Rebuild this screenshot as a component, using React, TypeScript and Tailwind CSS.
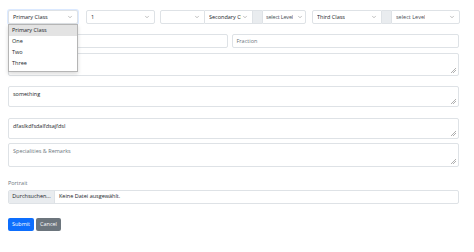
import { ChevronDown } from 'lucide-react';

const field = 'h-[14px] border border-[#dee2e6] bg-white rounded-[2px]';

function Select({ label, className = '', muted = false }: { label: string; className?: string; muted?: boolean }) {
  return (
    <div className={`${field} flex items-center justify-between overflow-hidden pl-[4px] pr-[4px] ${className}`}>
      <span className={`overflow-hidden whitespace-nowrap ${muted ? 'text-[#495057]' : 'text-[#212529]'}`}>{label}</span>
      <ChevronDown size={6} strokeWidth={1.5} className="ml-[1px] shrink-0 text-[#555]" aria-hidden />
    </div>
  );
}

function Addon() {
  return <div className="h-[14px] w-[9px] shrink-0 border-y border-[#dee2e6] bg-[#e9ecef]" />;
}

function Area({ text, placeholder = false, className = '' }: { text?: string; placeholder?: boolean; className?: string }) {
  return (
    <div className={`relative border border-[#dee2e6] bg-white rounded-[2px] px-[4px] pt-[4px] ${className}`}>
      {text && <span className={placeholder ? 'text-[#6c757d]' : 'text-[#212529]'}>{text}</span>}
      <svg width="5" height="5" viewBox="0 0 5 5" className="absolute bottom-[2px] right-[2px]" aria-hidden>
        <path d="M5 0 L0 5 M5 2 L2 5" stroke="#9a9a9a" strokeWidth="0.8" />
      </svg>
    </div>
  );
}

export default function App() {
  return (
    <div
      className="min-h-[252px] w-[474px] bg-white px-[8px] pt-[10px] text-[5.5px] leading-[1.2] text-[#212529]"
      style={{ fontFamily: '"Open Sans", "Noto Sans", sans-serif' }}
    >
      <div className="flex w-[451px] items-center">
        <div className="relative w-[70px] shrink-0">
          <div className={`${field} flex items-center justify-between px-[4px] border-[#86b7fe] shadow-[0_0_0_1px_rgba(13,110,253,0.15)]`}>
            <span>Primary Class</span>
            <ChevronDown size={6} strokeWidth={1.5} className="text-[#555]" aria-hidden />
          </div>
          <div className="absolute left-0 top-[14px] z-10 w-[70px] border border-[#b5b5b5] bg-white pb-[2px] shadow-[0_2px_4px_rgba(0,0,0,0.15)]">
            <div className="flex h-[11px] items-center bg-[#e3e3e3] px-[3px]">Primary Class</div>
            <div className="flex h-[11px] items-center px-[3px]">One</div>
            <div className="flex h-[11px] items-center px-[3px]">Two</div>
            <div className="flex h-[11px] items-center px-[3px]">Three</div>
          </div>
        </div>
        <Select label="1" className="ml-[8px] w-[69px] shrink-0" />
        <Select label="" className="ml-[5px] w-[45px] shrink-0 rounded-r-none" />
        <Select label="Secondary Class" className="w-[48px] shrink-0 rounded-none border-l-0" />
        <Addon />
        <Select label="select Level" muted className="w-[44px] shrink-0 rounded-l-none !pl-[3px] !pr-[2px] tracking-[-0.2px]" />
        <Select label="Third Class" className="ml-[6px] w-[70px] shrink-0 rounded-r-none" />
        <Addon />
        <Select label="select Level" muted className="w-[69px] shrink-0 rounded-l-none" />
      </div>

      <div className="mt-[10px] flex w-[451px] gap-[4px]">
        <div className={`${field} flex-1`} />
        <div className={`${field} flex flex-1 items-center px-[4px] text-[#6c757d]`}>Fraction</div>
      </div>

      <Area className="mt-[5px] h-[23px] w-[451px]" />
      <Area text="something" className="mt-[10px] h-[21px] w-[451px]" />
      <Area text="dfaslkdfsdalfdsajfdsl" className="mt-[11px] h-[21px] w-[451px]" />
      <Area text="Specialities & Remarks" placeholder className="mt-[4px] h-[24px] w-[451px]" />

      <div className="mt-[13px] text-[#6c757d]">Portrait</div>
      <div className="mt-[3px] flex h-[14px] w-[451px] items-stretch overflow-hidden rounded-[2px] border border-[#dee2e6]">
        <div className="flex w-[46px] items-center justify-center border-r border-[#dee2e6] bg-[#e9ecef]">Durchsuchen...</div>
        <div className="flex items-center pl-[4px]">Keine Datei ausgewählt.</div>
      </div>

      <div className="mt-[14px] flex gap-[2px]">
        <button type="button" className="h-[13px] w-[26px] rounded-[2px] bg-[#0d6efd] text-white">Submit</button>
        <button type="button" className="h-[13px] w-[25px] rounded-[2px] bg-[#6c757d] text-white">Cancel</button>
      </div>
    </div>
  );
}
